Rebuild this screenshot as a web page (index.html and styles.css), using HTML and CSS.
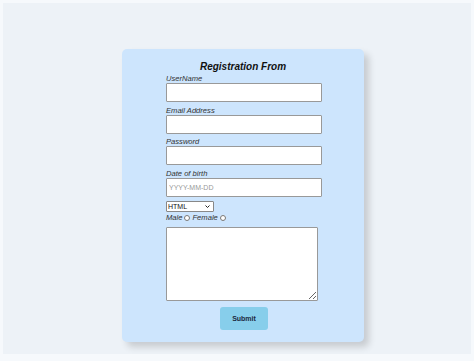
FILE: index.html
```html
<!DOCTYPE html>
<html lang="en">
<head>
    <meta charset="UTF-8">
    <meta name="viewport" content="width=device-width, initial-scale=1.0">
    <title>Registration Form</title>
    <link rel="stylesheet" href="styles.css">
</head>
<body>
    <div class="page">
        <form class="card">
            <h1>Registration From</h1>

            <label for="username">UserName</label>
            <input type="text" id="username">

            <label for="email">Email Address</label>
            <input type="email" id="email">

            <label for="password">Password</label>
            <input type="password" id="password">

            <label for="dob">Date of birth</label>
            <input type="text" id="dob" placeholder="YYYY-MM-DD">

            <div class="select-wrap">
                <select class="course">
                    <option>HTML</option>
                    <option>CSS</option>
                    <option>JavaScript</option>
                </select>
                <svg class="arrow" width="5" height="3" viewBox="0 0 5 3"><path d="M0.5 0.5 L2.5 2.5 L4.5 0.5" fill="none" stroke="#222" stroke-width="1"/></svg>
            </div>

            <div class="gender">
                <span>Male</span><input type="radio" name="gender">
                <span>Female</span><input type="radio" name="gender">
            </div>

            <textarea></textarea>

            <div class="actions">
                <button type="button">Submit</button>
            </div>
        </form>
    </div>
</body>
</html>
```

FILE: styles.css
```css
html {
    background: #f6f9fc;
}
body {
    margin: 0;
    font-family: 'Liberation Sans', Arial, sans-serif;
}
.page {
    margin: 3px;
    height: 351px;
    padding-top: 46px;
    box-sizing: border-box;
    background: #edf2f7;
}
.card {
    width: 242px;
    height: 293px;
    margin-left: 119px;
    padding: 11px 0 0 44px;
    box-sizing: border-box;
    background: #cde5fd;
    border-radius: 5px;
    box-shadow: 5px 5px 7px rgba(0,0,0,0.16);
}
h1 {
    margin: 0 0 1px -44px;
    font-size: 10px;
    line-height: 13px;
    font-style: italic;
    text-align: center;
    color: #111;
}
label {
    display: block;
    font-size: 7.6px;
    line-height: 9px;
    font-style: italic;
    color: #333;
}
input[type="text"],
input[type="email"],
input[type="password"] {
    display: block;
    width: 156px;
    height: 19px;
    margin: 0 0 3.67px;
    padding: 0 2px;
    box-sizing: border-box;
    border: 1px solid #999;
    border-radius: 1px;
    background: #fff;
    font-size: 7px;
}
input::placeholder {
    color: #999;
}
.select-wrap {
    position: relative;
    width: 48px;
    margin-top: 1px;
}
.course {
    display: block;
    width: 48px;
    height: 11px;
    margin: 0;
    padding: 0 0 0 1px;
    font-size: 7px;
    line-height: 9px;
    border: 1px solid #888;
    border-radius: 1px;
    background: #fff;
    color: #111;
    appearance: none;
}
.arrow {
    position: absolute;
    right: 4px;
    top: 4px;
}
.gender {
    display: flex;
    align-items: center;
    height: 10px;
    margin: 1px 0 4px;
    font-size: 7.6px;
    font-style: italic;
    color: #333;
}
.gender input {
    width: 6px;
    height: 6px;
    margin: 0 2px 0 2px;
}
textarea {
    display: block;
    width: 152px;
    height: 74px;
    margin: 0;
    box-sizing: border-box;
    border: 1px solid #999;
    border-radius: 1px;
}
.actions {
    width: 156px;
    display: flex;
    justify-content: center;
    margin-top: 6px;
}
button {
    width: 48px;
    height: 23px;
    background: #87ceeb;
    color: #1b2a40;
    border: none;
    border-radius: 3px;
    font-family: 'Liberation Sans', Arial, sans-serif;
    font-size: 7px;
    font-weight: bold;
    cursor: pointer;
}
```
